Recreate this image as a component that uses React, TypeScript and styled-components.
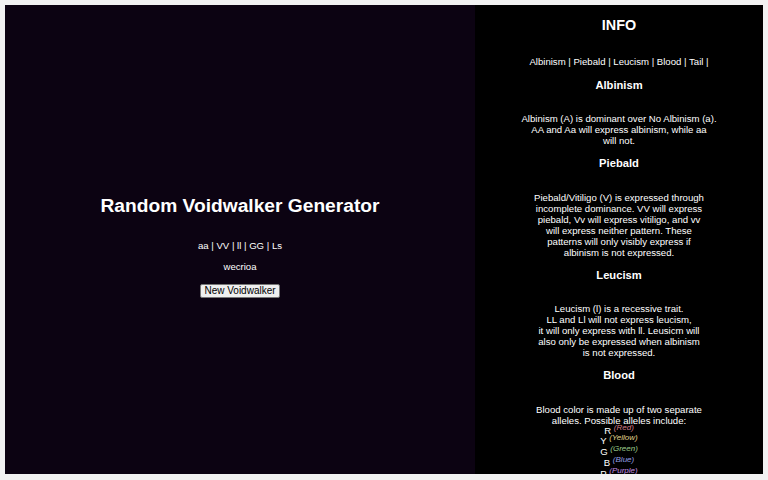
import React from 'react'
import styled, { createGlobalStyle } from 'styled-components'

const GlobalStyle = createGlobalStyle`
  html, body {
    padding: 0;
  }
  body {
    margin: 5px;
    background: #f2f2f2;
    font-family: 'Liberation Sans', Arial, sans-serif;
    color: #fff;
    overflow: hidden;
  }
`

const Page = styled.div`
  display: flex;
  height: 469px;
`

// left side: the generator
const Generator = styled.main`
  flex: 1;
  background: #0c0312;
  display: flex;
  flex-direction: column;
  align-items: center;
  justify-content: center;
  text-align: center;
`

const Title = styled.h1`
  margin: 13px 0 0;
  font-size: 19.2px;
  line-height: 22px;
  font-weight: bold;
`

const Line = styled.p<{ $gap: number }>`
  margin: ${(p) => p.$gap}px 0 0;
  font-size: 9.6px;
  line-height: 11px;
`

const Button = styled.button`
  margin-top: 11.5px;
  font-family: inherit;
  font-size: 10px;
  line-height: 12px;
  padding: 0 3px;
  color: #000;
  background: #efefef;
  border: 1px solid #767676;
  border-radius: 2px;
`

// right side: info panel
const Info = styled.aside`
  width: 288px;
  background: #000;
  overflow: hidden;
  display: flex;
  flex-direction: column;
  align-items: center;
  text-align: center;
`

const InfoTitle = styled.h2`
  margin: 12px 0 0;
  font-size: 14.4px;
  line-height: 16.5px;
  font-weight: bold;
`

const Nav = styled.p`
  margin: 22px 0 0;
  font-size: 9.6px;
  line-height: 11px;
`

const SectionTitle = styled.h3<{ $first?: boolean }>`
  margin: ${(p) => (p.$first ? 12 : 11)}px 0 0;
  font-size: 11.2px;
  line-height: 13px;
  font-weight: bold;
`

const Text = styled.p`
  margin: 21.5px 0 0;
  font-size: 9.6px;
  line-height: 11px;
  white-space: nowrap;
`

const Allele = styled.div`
  font-size: 9.6px;
  line-height: 10.8px;
`

const Tone = styled.sup<{ $color: string }>`
  font-size: 8px;
  font-style: italic;
  line-height: 0;
  vertical-align: 4px;
  color: ${(p) => p.$color};
`

const alleles = [
  { code: 'R', name: 'Red', color: '#d47c86' },
  { code: 'Y', name: 'Yellow', color: '#e2d68c' },
  { code: 'G', name: 'Green', color: '#9ccd8c' },
  { code: 'B', name: 'Blue', color: '#939fe4' },
  { code: 'P', name: 'Purple', color: '#c08ee2' },
]

const sections = [
  {
    title: 'Albinism',
    lines: [
      'Albinism (A) is dominant over No Albinism (a).',
      'AA and Aa will express albinism, while aa',
      'will not.',
    ],
  },
  {
    title: 'Piebald',
    lines: [
      'Piebald/Vitiligo (V) is expressed through',
      'incomplete dominance. VV will express',
      'piebald, Vv will express vitiligo, and vv',
      'will express neither pattern. These',
      'patterns will only visibly express if',
      'albinism is not expressed.',
    ],
  },
  {
    title: 'Leucism',
    lines: [
      'Leucism (l) is a recessive trait.',
      'LL and Ll will not express leucism,',
      'it will only express with ll. Leusicm will',
      'also only be expressed when albinism',
      'is not expressed.',
    ],
  },
]

const Lines = ({ lines }: { lines: string[] }) => (
  <>
    {lines.map((l, i) => (
      <React.Fragment key={i}>
        {i > 0 && <br />}
        {l}
      </React.Fragment>
    ))}
  </>
)

export default function App() {
  return (
    <>
      <GlobalStyle />
      <Page>
        <Generator>
          <Title>Random Voidwalker Generator</Title>
          <Line $gap={23.5}>aa | VV | ll | GG | Ls</Line>
          <Line $gap={10}>wecrioa</Line>
          <Button>New Voidwalker</Button>
        </Generator>
        <Info>
          <InfoTitle>INFO</InfoTitle>
          <Nav>Albinism | Piebald | Leucism | Blood | Tail |</Nav>
          {sections.map((s, i) => (
            <React.Fragment key={s.title}>
              <SectionTitle $first={i === 0}>{s.title}</SectionTitle>
              <Text>
                <Lines lines={s.lines} />
              </Text>
            </React.Fragment>
          ))}
          <SectionTitle>Blood</SectionTitle>
          <Text>
            <Lines lines={['Blood color is made up of two separate', 'alleles. Possible alleles include:']} />
            {alleles.map((a) => (
              <Allele key={a.code}>
                {a.code} <Tone $color={a.color}>({a.name})</Tone>
              </Allele>
            ))}
          </Text>
        </Info>
      </Page>
    </>
  )
}
